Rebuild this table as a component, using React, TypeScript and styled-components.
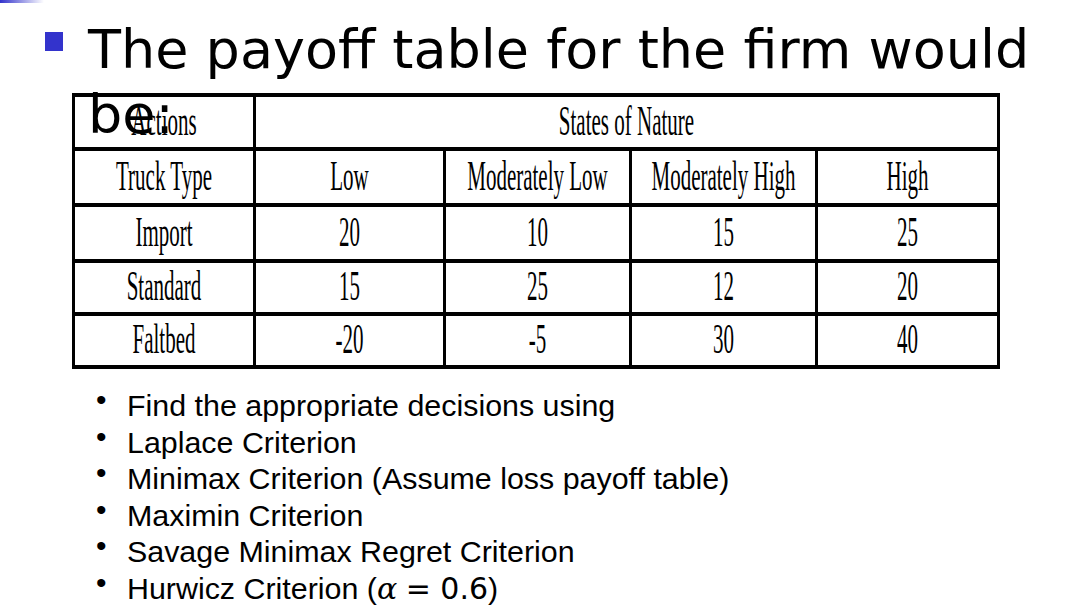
import React from 'react';
import styled, { createGlobalStyle } from 'styled-components';

const GlobalStyle = createGlobalStyle`
  html, body {
    margin: 0;
    padding: 0;
    background: #ffffff;
  }
  body {
    width: 1078px;
    height: 614px;
    overflow: hidden;
  }
`;

const headers = ['Low', 'Moderately Low', 'Moderately High', 'High'];

const rows = [
  { name: 'Import', values: ['20', '10', '15', '25'] },
  { name: 'Standard', values: ['15', '25', '12', '20'] },
  { name: 'Faltbed', values: ['-20', '-5', '30', '40'] },
];

const criteria = [
  'Find the appropriate decisions using',
  'Laplace Criterion',
  'Minimax Criterion (Assume loss payoff table)',
  'Maximin Criterion',
  'Savage Minimax Regret Criterion',
];

function App() {
  return (
    <Slide>
      <GlobalStyle />
      <Accent />
      <TitleRow>
        <BlueSquare />
        <Title>The payoff table for the firm would be:</Title>
      </TitleRow>

      <PayoffTable>
        <Cell>
          <CellText>Actions</CellText>
        </Cell>
        <Cell $span={4}>
          <CellText>States of Nature</CellText>
        </Cell>

        <Cell>
          <CellText>Truck Type</CellText>
        </Cell>
        {headers.map((h) => (
          <Cell key={h}>
            <CellText>{h}</CellText>
          </Cell>
        ))}

        {rows.map((row) => (
          <React.Fragment key={row.name}>
            <Cell>
              <CellText>{row.name}</CellText>
            </Cell>
            {row.values.map((v, i) => (
              <Cell key={i}>
                <CellText>{v}</CellText>
              </Cell>
            ))}
          </React.Fragment>
        ))}
      </PayoffTable>

      <Criteria>
        {criteria.map((c) => (
          <Item key={c}>{c}</Item>
        ))}
        <Item>
          Hurwicz Criterion (<Alpha>α</Alpha> <MathText>= 0.6</MathText>)
        </Item>
      </Criteria>
    </Slide>
  );
}

const Slide = styled.div`
  position: relative;
  width: 1078px;
  height: 614px;
  background: #ffffff;
  overflow: hidden;
`;

const Accent = styled.div`
  width: 44px;
  height: 3px;
  background: linear-gradient(to right, #3333cc, #ffffff);
`;

const TitleRow = styled.div`
  position: relative;
  z-index: 2;
  display: flex;
  align-items: flex-start;
  height: 76px;
  padding-top: 14px;
  padding-left: 45px;
`;

const BlueSquare = styled.div`
  flex: none;
  width: 18px;
  height: 19px;
  margin-top: 15px;
  margin-right: 25px;
  background: #3333cc;
`;

const Title = styled.h1`
  margin: 0;
  width: 950px;
  font-family: 'DejaVu Sans', sans-serif;
  font-weight: normal;
  font-size: 54px;
  line-height: 65px;
  color: #000000;
`;

const PayoffTable = styled.div`
  display: grid;
  grid-template-columns: 178px 187px 183px 183px 1fr;
  grid-template-rows: 50px 52px 52px 49px 49px;
  column-gap: 3px;
  row-gap: 4px;
  width: 928px;
  margin-left: 72px;
  padding: 4px 3px;
  box-sizing: border-box;
  background: #000000;
`;

const Cell = styled.div<{ $span?: number }>`
  grid-column: span ${(p) => p.$span || 1};
  display: flex;
  align-items: center;
  justify-content: center;
  background: #ffffff;
`;

const CellText = styled.span`
  display: inline-block;
  font-family: 'Liberation Serif', 'Times New Roman', serif;
  font-size: 21px;
  line-height: 21px;
  color: #000000;
  white-space: nowrap;
  transform: translateY(-1px) scaleY(2.05);
`;

const Criteria = styled.ul`
  list-style: none;
  margin: 18px 0 0 0;
  padding: 0 0 0 127px;
`;

const Item = styled.li`
  position: relative;
  font-family: 'Liberation Sans', Arial, sans-serif;
  font-size: 30.4px;
  line-height: 36.6px;
  color: #000000;
  white-space: nowrap;

  &::before {
    content: '•';
    position: absolute;
    left: -31px;
    top: -5px;
    font-size: 30px;
  }
`;

const Alpha = styled.span`
  font-family: 'DejaVu Serif', 'Liberation Serif', serif;
  font-style: italic;
  font-size: 30px;
`;

const MathText = styled.span`
  font-family: 'DejaVu Sans', sans-serif;
  font-size: 30px;
`;

export default App;
